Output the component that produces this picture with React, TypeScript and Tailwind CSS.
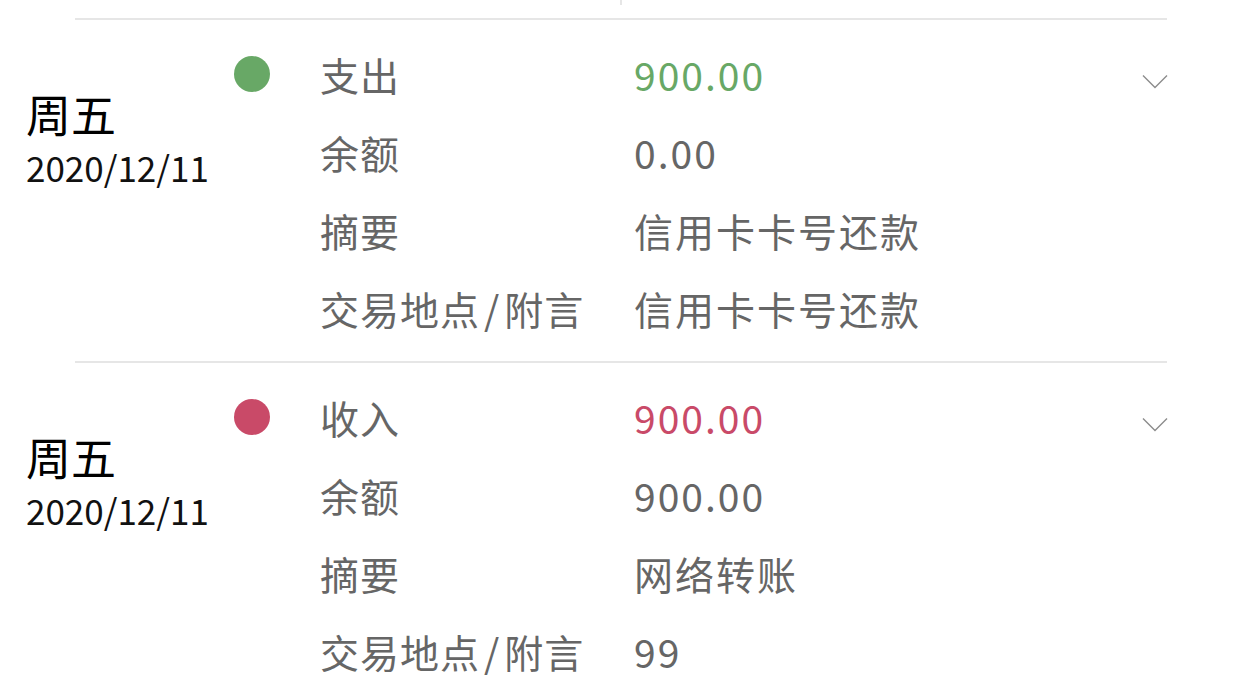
interface Entry {
  weekday: string;
  date: string;
  kind: string;
  amount: string;
  balance: string;
  summary: string;
  note: string;
  income: boolean;
}

const entries: Entry[] = [
  {
    weekday: '周五',
    date: '2020/12/11',
    kind: '支出',
    amount: '900.00',
    balance: '0.00',
    summary: '信用卡卡号还款',
    note: '信用卡卡号还款',
    income: false,
  },
  {
    weekday: '周五',
    date: '2020/12/11',
    kind: '收入',
    amount: '900.00',
    balance: '900.00',
    summary: '网络转账',
    note: '99',
    income: true,
  },
];

const font = { fontFamily: '"Noto Sans CJK SC", "Noto Sans", sans-serif' };

function Row({ label, value, valueClass }: { label: React.ReactNode; value: string; valueClass?: string }) {
  return (
    <div className="flex items-center h-[78px]">
      <div className="w-[314px] text-[39px] text-[#666666] tracking-[1px] whitespace-nowrap">{label}</div>
      <div className={`flex-1 text-[39px] tracking-[2px] ${valueClass ?? 'text-[#666666]'}`}>{value}</div>
    </div>
  );
}

function Chevron() {
  return (
    <svg width="26" height="15" viewBox="0 0 26 15" fill="none" className="mt-[14px]">
      <polyline points="1,1.5 13,13.5 25,1.5" stroke="#8c8c8c" strokeWidth="1.4" />
    </svg>
  );
}

function EntryBlock({ entry }: { entry: Entry }) {
  const color = entry.income ? 'text-[#c94a68]' : 'text-[#68a866]';
  return (
    <div>
      <div className="mx-[75px] h-[2px] bg-[#e6e6e6]" />
      <div className="flex pl-[26px] pr-[74px] pt-[15px] pb-[14px]">
        {/* date */}
        <div className="w-[208px] pt-[52px]">
          <div className="text-[45px] leading-[54px] text-black">{entry.weekday}</div>
          <div className="mt-[6px] text-[35px] leading-[40px] text-[#111111]">{entry.date}</div>
        </div>
        {/* dot */}
        <div className="w-[86px] h-[78px] flex items-center">
          <div className={`w-[36px] h-[36px] rounded-full ${entry.income ? 'bg-[#c94a68]' : 'bg-[#68a866]'}`} />
        </div>
        {/* fields */}
        <div className="flex-1">
          <Row label={entry.kind} value={entry.amount} valueClass={color} />
          <Row label="余额" value={entry.balance} />
          <Row label="摘要" value={entry.summary} />
          <Row
            label={
              <>
                交易地点<span className="mx-[4px]">/</span>附言
              </>
            }
            value={entry.note}
          />
        </div>
        <div className="h-[78px] flex items-center">
          <Chevron />
        </div>
      </div>
    </div>
  );
}

export default function App() {
  return (
    <div className="w-[1242px] h-[695px] overflow-hidden bg-white" style={font}>
      <div className="h-[18px]">
        <div className="ml-[620px] w-[2px] h-[5px] bg-[#e6e6e6]" />
      </div>
      {entries.map((e, i) => (
        <EntryBlock key={i} entry={e} />
      ))}
    </div>
  );
}
